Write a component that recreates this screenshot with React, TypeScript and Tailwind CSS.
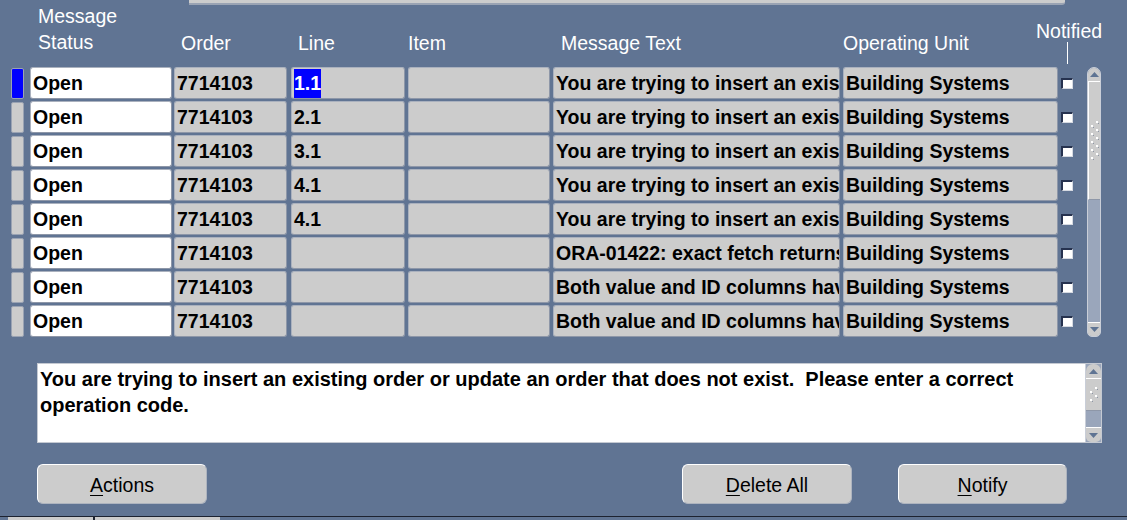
import React from "react";

// Oracle Forms style "Messages" block: header labels, 8 record rows,
// full-text box and the button bar.

type Row = {
  status: string;
  order: string;
  line: string;
  item: string;
  text: string;
  unit: string;
};

const EXISTING =
  "You are trying to insert an existing order or update an order that does not exist.  Please enter a correct operation code.";

const ROWS: Row[] = [
  { status: "Open", order: "7714103", line: "1.1", item: "", text: EXISTING, unit: "Building Systems" },
  { status: "Open", order: "7714103", line: "2.1", item: "", text: EXISTING, unit: "Building Systems" },
  { status: "Open", order: "7714103", line: "3.1", item: "", text: EXISTING, unit: "Building Systems" },
  { status: "Open", order: "7714103", line: "4.1", item: "", text: EXISTING, unit: "Building Systems" },
  { status: "Open", order: "7714103", line: "4.1", item: "", text: EXISTING, unit: "Building Systems" },
  {
    status: "Open",
    order: "7714103",
    line: "",
    item: "",
    text: "ORA-01422: exact fetch returns more than requested number of rows",
    unit: "Building Systems",
  },
  {
    status: "Open",
    order: "7714103",
    line: "",
    item: "",
    text: "Both value and ID columns have values",
    unit: "Building Systems",
  },
  {
    status: "Open",
    order: "7714103",
    line: "",
    item: "",
    text: "Both value and ID columns have values",
    unit: "Building Systems",
  },
];

const field =
  "h-[32px] flex items-center overflow-hidden whitespace-nowrap rounded-[3px] border border-[#aab1be] border-b-[#8e97a8] border-r-[#8e97a8] font-bold text-[19.5px] text-black pl-[2px] pt-[1px]";

function Arrow({ up }: { up?: boolean }) {
  return (
    <svg width="9" height="5" viewBox="0 0 9 5">
      <path d={up ? "M0 5 L4.5 0 L9 5 Z" : "M0 0 L4.5 5 L9 0 Z"} fill="#5f7493" />
    </svg>
  );
}

function Grip({ rows }: { rows: number }) {
  const dots = [];
  for (let i = 0; i < rows; i++) {
    dots.push(<rect key={`a${i}`} x={1} y={i * 8 + 4} width={2} height={2} fill="#ffffff" />);
    dots.push(<rect key={`b${i}`} x={6} y={i * 8} width={2} height={2} fill="#ffffff" />);
    dots.push(<rect key={`c${i}`} x={3} y={i * 8 + 6} width={1} height={1} fill="#8d96a6" />);
    dots.push(<rect key={`d${i}`} x={8} y={i * 8 + 2} width={1} height={1} fill="#8d96a6" />);
  }
  return (
    <svg width="10" height={rows * 8} viewBox={`0 0 10 ${rows * 8}`}>
      {dots}
    </svg>
  );
}

function TableScroll() {
  return (
    <div className="w-[14px] h-[270px] flex flex-col bg-[#9aa6bb] rounded-t-[7px] rounded-b-[5px] overflow-hidden border border-[#c9ced8]">
      <div className="h-[14px] shrink-0 bg-[#cccccc] border-b border-white flex items-center justify-center">
        <Arrow up />
      </div>
      <div className="h-[118px] shrink-0 bg-[#cccccc] border-l border-white border-b border-b-[#8e97a8] flex items-center justify-center">
        <Grip rows={5} />
      </div>
      <div className="flex-1" />
      <div className="h-[14px] shrink-0 bg-[#cccccc] border-t border-white flex items-center justify-center">
        <Arrow />
      </div>
    </div>
  );
}

function Button({ label, w }: { label: string; w: string }) {
  return (
    <button
      type="button"
      className={`${w} h-[40px] pt-[3px] bg-[#cccccc] rounded-[6px] border border-white border-b-[#aeb4bf] border-r-[#aeb4bf] text-[19.5px] text-black flex items-center justify-center`}
    >
      <span>
        <span className="underline underline-offset-[3px]">{label[0]}</span>
        {label.slice(1)}
      </span>
    </button>
  );
}

export default function App() {
  return (
    <div
      className="w-[1127px] h-[520px] bg-[#607493] overflow-hidden flex flex-col"
      style={{ fontFamily: '"Liberation Sans", Arial, sans-serif' }}
    >
      {/* strip of the block above */}
      <div className="ml-[189px] w-[876px] h-[5px] shrink-0 bg-[#cccccc] border-b-2 border-[#9aa3b3] rounded-br-[3px]" />

      {/* column prompts */}
      <div className="h-[62px] shrink-0 flex items-end text-[19.5px] leading-[26px] text-white">
        <div className="ml-[30px] w-[142px] pl-[8px] pb-[12px]">
          Message
          <br />
          Status
        </div>
        <div className="ml-[2px] w-[113px] pl-[7px] pb-[11px]">Order</div>
        <div className="ml-[4px] w-[114px] pl-[7px] pb-[11px]">Line</div>
        <div className="ml-[3px] w-[142px] pb-[11px]">Item</div>
        <div className="ml-[3px] w-[287px] pl-[8px] pb-[11px]">Message Text</div>
        <div className="ml-[3px] w-[193px] pb-[11px]">Operating Unit</div>
        <div className="w-[70px] flex flex-col leading-[20px]">
          <span className="pb-[1px]">Notified</span>
          <div className="ml-[31px] w-px h-[22px] bg-white mb-[3px]" />
        </div>
      </div>

      {/* records + scrollbar */}
      <div className="flex shrink-0">
        <div className="flex flex-col gap-[2px]">
          {ROWS.map((r, i) => (
            <div key={i} className="flex items-center h-[32px]">
              <div
                className={`ml-[11px] w-[13px] h-[31px] rounded-[2px] border ${
                  i === 0 ? "bg-[#0000ff] border-[#9aa3b3]" : "bg-[#cccccc] border-[#9aa3b3]"
                }`}
              />
              <div className={`ml-[6px] w-[142px] bg-white ${field}`}>{r.status}</div>
              <div className={`ml-[2px] w-[113px] bg-[#cccccc] ${field}`}>{r.order}</div>
              <div className={`ml-[4px] w-[114px] bg-[#cccccc] ${field}`}>
                {i === 0 ? <span className="bg-[#0000ff] text-white">{r.line}</span> : r.line}
              </div>
              <div className={`ml-[3px] w-[142px] bg-[#cccccc] ${field}`}>{r.item}</div>
              <div className={`ml-[3px] w-[287px] bg-[#cccccc] ${field}`}>{r.text}</div>
              <div className={`ml-[3px] w-[215px] bg-[#cccccc] ${field}`}>{r.unit}</div>
              <div className="ml-[3px] w-[12px] h-[11px] bg-white border-t-2 border-l-2 border-[#26324f] border-b border-r border-b-[#d6dae2] border-r-[#d6dae2]" />
            </div>
          ))}
        </div>
        <div className="ml-[14px]">
          <TableScroll />
        </div>
      </div>

      {/* full message text */}
      <div className="ml-[37px] mt-[26px] w-[1065px] h-[80px] shrink-0 flex bg-white border border-[#c4c9d2]">
        <div className="flex-1 pl-[2px] pt-[2px] font-bold text-[20px] leading-[26px] text-black whitespace-pre-wrap">
          {EXISTING}
        </div>
        <div className="w-[16px] h-full flex flex-col bg-[#9aa6bb] border-l border-[#c9ced8]">
          <div className="h-[15px] shrink-0 bg-[#cccccc] rounded-t-[7px] border-b border-white flex items-center justify-center">
            <Arrow up />
          </div>
          <div className="h-[32px] shrink-0 bg-[#cccccc] border-b border-[#8e97a8] flex items-center justify-center">
            <Grip rows={2} />
          </div>
          <div className="flex-1" />
          <div className="h-[15px] shrink-0 bg-[#cccccc] rounded-b-[5px] border-t border-white flex items-center justify-center">
            <Arrow />
          </div>
        </div>
      </div>

      {/* buttons */}
      <div className="mt-[21px] flex shrink-0">
        <div className="ml-[37px]">
          <Button label="Actions" w="w-[170px]" />
        </div>
        <div className="ml-[475px]">
          <Button label="Delete All" w="w-[170px]" />
        </div>
        <div className="ml-[46px]">
          <Button label="Notify" w="w-[169px]" />
        </div>
      </div>

      {/* window edge / tab strip */}
      <div className="mt-[12px] h-[4px] shrink-0 border-t border-[#1c2230] flex">
        <div className="ml-[8px] w-[85px] bg-[#cccccc]" />
        <div className="w-[2px] bg-[#1c2230]" />
        <div className="w-[125px] bg-[#cccccc]" />
      </div>
    </div>
  );
}
